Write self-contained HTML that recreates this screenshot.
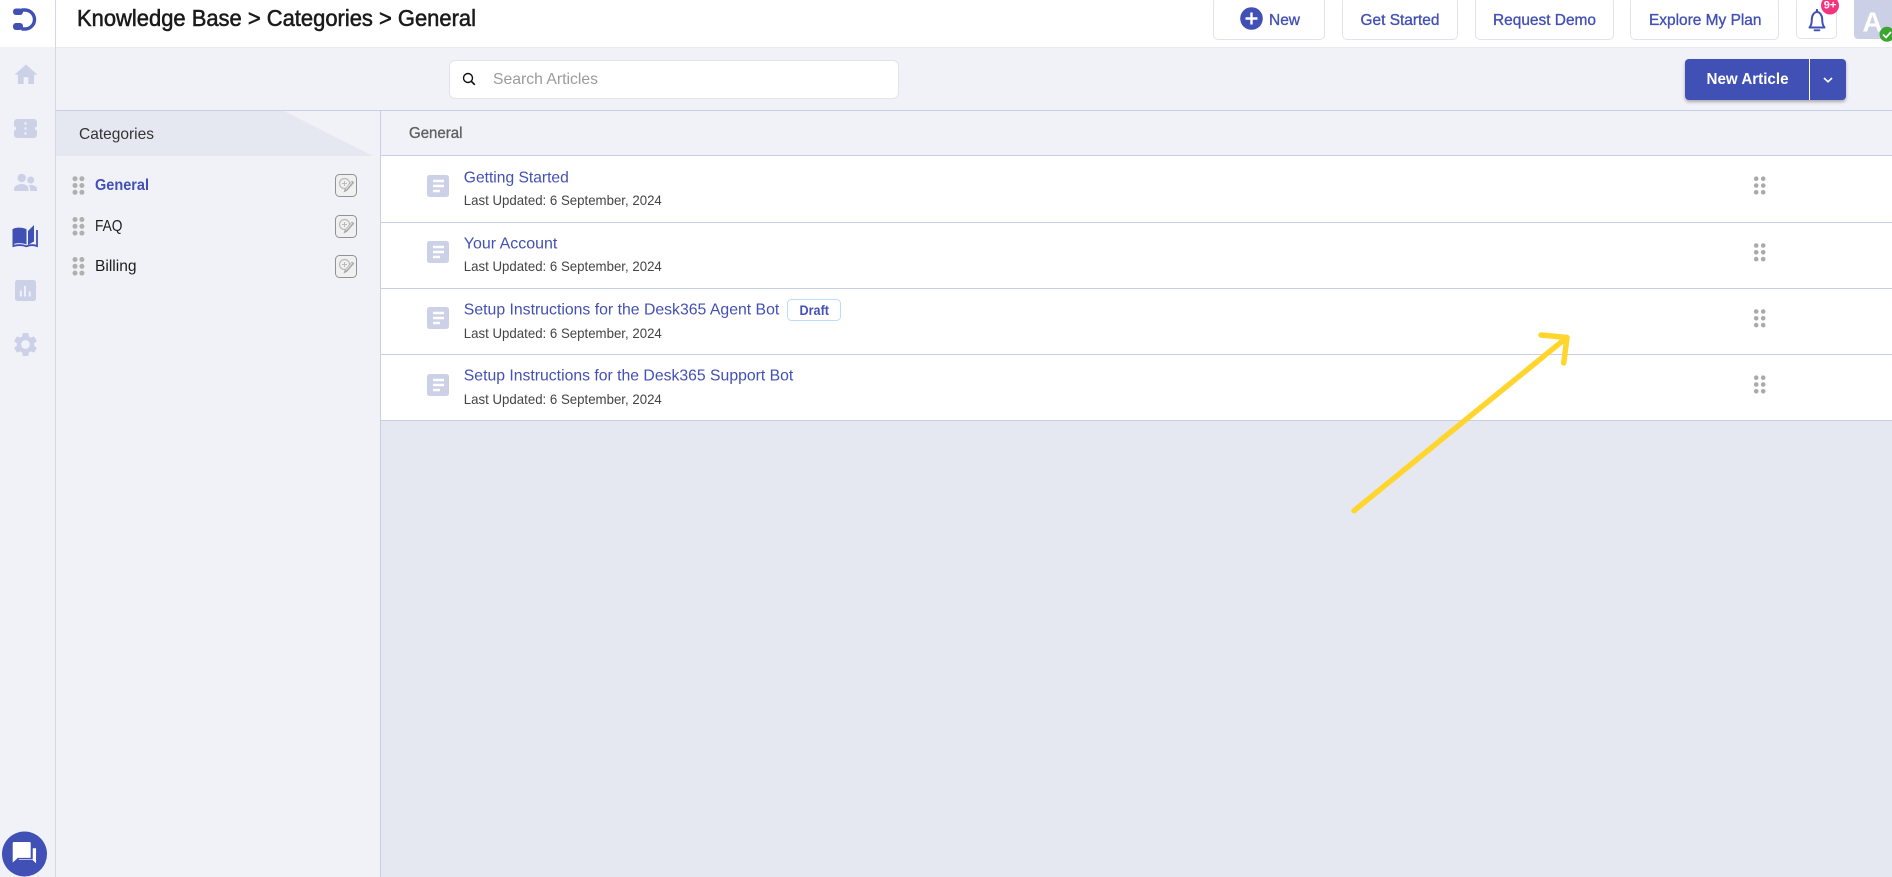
<!DOCTYPE html>
<html lang="en">
<head>
<meta charset="utf-8">
<title>Knowledge Base</title>
<style>
html,body{margin:0;padding:0;width:1892px;height:877px;overflow:hidden;background:#f1f2f8;font-family:"Liberation Sans",sans-serif}
.b{position:absolute;box-sizing:border-box}
.btn{background:#fff;border:1px solid #e2e3e9;border-radius:5px}
svg{position:absolute;left:0;top:0}
text{font-family:"Liberation Sans",sans-serif}
.m{stroke-width:.35px}
.t{stroke-width:.55px}
</style>
</head>
<body>
<div class="b" style="left:0;top:0;width:1892px;height:47px;background:#fff"></div>
<div class="b" style="left:55px;top:47px;width:1837px;height:1px;background:#e9eaf0"></div>
<div class="b" style="left:55px;top:0;width:1px;height:877px;background:#d5d7e2"></div>

<div class="b btn" style="left:1213px;top:-3px;width:112px;height:43px"></div>
<div class="b btn" style="left:1342px;top:-3px;width:116px;height:43px"></div>
<div class="b btn" style="left:1475px;top:-3px;width:139px;height:43px"></div>
<div class="b btn" style="left:1630px;top:-3px;width:149px;height:43px"></div>
<div class="b btn" style="left:1796px;top:-3px;width:41px;height:42px"></div>
<div class="b" style="left:1854px;top:0;width:38px;height:39px;background:#ccd0e6;border-radius:0 0 0 4px"></div>

<div class="b" style="left:449px;top:60px;width:450px;height:39px;background:#fff;border:1px solid #e3e4ea;border-radius:6px"></div>
<div class="b" style="left:1685px;top:59px;width:161px;height:41px;background:#4050b5;border-radius:4px;box-shadow:0 2px 3px rgba(0,0,0,.3)"></div>
<div class="b" style="left:1809px;top:59px;width:1px;height:41px;background:#fff"></div>

<div class="b" style="left:56px;top:110px;width:1836px;height:1px;background:#c9cee6"></div>
<div class="b" style="left:380px;top:110px;width:1px;height:767px;background:#c9cee6"></div>
<div class="b" style="left:381px;top:155px;width:1511px;height:266px;background:#fff"></div>
<div class="b" style="left:381px;top:421px;width:1511px;height:456px;background:#e5e8f1"></div>
<div class="b" style="left:381px;top:155px;width:1511px;height:1px;background:#c9cee6"></div>
<div class="b" style="left:381px;top:222px;width:1511px;height:1px;background:#c9cee6"></div>
<div class="b" style="left:381px;top:288px;width:1511px;height:1px;background:#c9cee6"></div>
<div class="b" style="left:381px;top:354px;width:1511px;height:1px;background:#c9cee6"></div>
<div class="b" style="left:381px;top:420px;width:1511px;height:1px;background:#c9cee6"></div>

<svg width="1892" height="877" viewBox="0 0 1892 877" xmlns="http://www.w3.org/2000/svg">
  <defs>
    <g id="grip" fill="#b0b0b0">
      <circle cx="0" cy="0" r="2.500"/><circle cx="6.900" cy="0" r="2.500"/>
      <circle cx="0" cy="6.800" r="2.500"/><circle cx="6.900" cy="6.800" r="2.500"/>
      <circle cx="0" cy="13.600" r="2.500"/><circle cx="6.900" cy="13.600" r="2.500"/>
    </g>
    <g id="grip2" fill="#aaa">
      <circle cx="0" cy="0" r="2.300"/><circle cx="7" cy="0" r="2.300"/>
      <circle cx="0" cy="6.800" r="2.300"/><circle cx="7" cy="6.800" r="2.300"/>
      <circle cx="0" cy="13.600" r="2.300"/><circle cx="7" cy="13.600" r="2.300"/>
    </g>
    <g id="doc">
      <rect x="0" y="0" width="22" height="22" rx="2.500" fill="#cdd1e8"/>
      <path d="M6 6h11M6 11h11M6 16h7" stroke="#fff" stroke-width="2.500" fill="none"/>
    </g>
    <g id="edit">
      <rect x=".5" y=".5" width="21" height="22" rx="4" fill="#f0f0f1" stroke="#929292"/>
      <circle cx="9.500" cy="9.500" r="5" fill="none" stroke="#bcbcbc" stroke-width="1.200"/>
      <path d="M9.500 7v5M7 9.500h5" stroke="#bcbcbc" stroke-width="1"/>
      <path d="M8.500 18.500l1.300-3.800 7.200-8.200 2.300 2-7.200 8.200z" fill="#a8a8a8"/>
      <path d="M10.800 15.200l6.400-7.300" stroke="#f0f0f1" stroke-width=".8"/>
    </g>
  </defs>

  <!-- sidebar icons -->
  <path d="M21.500 10h3.500a9.500 9.500 0 0 1 0 19h-3.500" fill="none" stroke="#4050b5" stroke-width="3.400"/>
  <rect x="13" y="8.500" width="10" height="6.500" rx="3" fill="#4050b5"/>
  <rect x="13" y="23" width="10" height="7" rx="3" fill="#4050b5"/>

  <path transform="translate(12.200,61) scale(1.150)" fill="#cdd1e8" d="M10 20v-6h4v6h5v-8h3L12 3 2 12h3v8z"/>

  <path fill="#cdd1e8" d="M17 119h17a3 3 0 0 1 3 3v4.500a2 2 0 0 0 0 4V135a3 3 0 0 1-3 3H17a3 3 0 0 1-3-3v-4.500a2 2 0 0 0 0-4V122a3 3 0 0 1 3-3z"/>
  <g fill="#f1f2f8"><circle cx="25.500" cy="123.500" r="1.200"/><circle cx="25.500" cy="128.500" r="1.200"/><circle cx="25.500" cy="133.500" r="1.200"/></g>

  <g fill="#cdd1e8">
    <circle cx="21.700" cy="178" r="4.200"/><circle cx="30.700" cy="180" r="3.500"/>
    <path d="M14 191v-2.200c0-3 4.500-4.800 7.700-4.800s6.800 1.800 6.800 4.800v2.200z"/>
    <path d="M30 191v-2.500c0-1.300-.5-2.400-1.400-3.300.7-.2 1.400-.3 2.100-.3 3 0 6.300 1.500 6.300 4v2.100z"/>
  </g>

  <path fill="#4050b5" d="M13.500 228.500c4-1.300 9-1.300 13 .7v15.300c-3.800-1.700-9-1.700-13-.5z"/>
  <path fill="#4050b5" d="M28 231l6-6v16.500l-6 3.500z"/>
  <path fill="none" stroke="#4050b5" stroke-width="1.800" d="M13.400 229v17c4-1.200 9-1.200 13 .3 3.500-1.500 7.500-1.500 10.600-.3V230"/>

  <rect x="15" y="280" width="21" height="21" rx="2.500" fill="#cdd1e8"/>
  <path d="M20.800 290.500v6M25 286v10.500M29.700 291.500v5" stroke="#f1f2f8" stroke-width="1.900"/>

  <path transform="translate(11.100,330.100) scale(1.200)" fill="#cdd1e8" d="M19.140 12.940c.04-.3.06-.61.06-.94 0-.32-.02-.64-.07-.94l2.030-1.580c.18-.14.23-.41.12-.61l-1.920-3.320c-.12-.22-.37-.29-.59-.22l-2.390.96c-.5-.38-1.030-.7-1.620-.94l-.36-2.540c-.04-.24-.24-.41-.48-.41h-3.840c-.24 0-.43.17-.47.41l-.36 2.540c-.59.24-1.130.57-1.620.94l-2.390-.96c-.22-.08-.47 0-.59.22L2.740 8.870c-.12.21-.08.47.12.61l2.030 1.580c-.05.3-.09.63-.09.94s.02.64.07.94l-2.030 1.580c-.18.14-.23.41-.12.61l1.920 3.320c.12.22.37.29.59.22l2.390-.96c.5.38 1.030.7 1.620.94l.36 2.540c.05.24.24.41.48.41h3.840c.24 0 .44-.17.47-.41l.36-2.540c.59-.24 1.130-.56 1.620-.94l2.390.96c.22.08.47 0 .59-.22l1.920-3.320c.12-.22.07-.47-.12-.61l-2.010-1.580zM12 15.600c-1.980 0-3.600-1.620-3.600-3.600s1.620-3.600 3.600-3.600 3.600 1.620 3.600 3.600-1.620 3.600-3.600 3.600z"/>

  <circle cx="24.500" cy="854" r="22.500" fill="#4050b5"/>
  <path fill="#fff" d="M14 842h15.500a1.200 1.200 0 0 1 1.200 1.200v14.300a1.200 1.200 0 0 1-1.200 1.200H17l-4.300 3.800V843.200A1.200 1.200 0 0 1 14 842z"/>
  <path fill="#fff" stroke="#4050b5" stroke-width="1.500" d="M32 847.500h4.800v17.500l-4.500-4.200H18v-2.200h14z"/>

  <!-- title -->
  <text x="77" y="26" font-size="23" fill="#1a1a1a" stroke="#1a1a1a" class="t" textLength="399" lengthAdjust="spacingAndGlyphs">Knowledge Base &gt; Categories &gt; General</text>

  <!-- header buttons -->
  <circle cx="1251.500" cy="18.500" r="11.300" fill="#4050b5"/>
  <path d="M1245.500 18.500h12M1251.500 12.500v12" stroke="#fff" stroke-width="2.400"/>
  <g font-size="16" fill="#4350b4" stroke="#4350b4" class="m">
    <text x="1269" y="25" textLength="31" lengthAdjust="spacingAndGlyphs">New</text>
    <text x="1360.500" y="25" textLength="79" lengthAdjust="spacingAndGlyphs">Get Started</text>
    <text x="1493" y="25" textLength="103" lengthAdjust="spacingAndGlyphs">Request Demo</text>
    <text x="1649" y="25" textLength="112.500" lengthAdjust="spacingAndGlyphs">Explore My Plan</text>
  </g>

  <!-- bell -->
  <path d="M1809.500 27.500c1.800-2 2.300-4 2.300-8 0-4.300 2.300-7.500 5.200-7.500s5.200 3.200 5.200 7.500c0 4 .5 6 2.300 8z" fill="#fff" stroke="#4050b5" stroke-width="2" stroke-linejoin="round"/>
  <path d="M1817 9v3" stroke="#4050b5" stroke-width="2"/>
  <path d="M1814.500 30.300h5" stroke="#4050b5" stroke-width="1.800" stroke-linecap="round"/>
  <circle cx="1830" cy="5.500" r="9" fill="#f5347f"/>
  <text x="1830" y="8.500" font-size="11" font-weight="bold" fill="#fff" text-anchor="middle">9+</text>

  <!-- avatar -->
  <text x="1872.500" y="31.500" font-size="28" font-weight="bold" fill="#fff" text-anchor="middle">A</text>
  <circle cx="1887" cy="34.300" r="7.500" fill="#3aa52f"/>
  <path d="M1883 34.500l3 3 5-5.500" fill="none" stroke="#fff" stroke-width="1.800"/>

  <!-- search -->
  <circle cx="468" cy="78" r="4.500" fill="none" stroke="#111" stroke-width="1.400"/>
  <path d="M471.200 81.200l3.600 3.600" stroke="#111" stroke-width="1.700"/>
  <text x="493" y="84" font-size="16" fill="#9b9b9b" textLength="105" lengthAdjust="spacingAndGlyphs">Search Articles</text>

  <!-- new article -->
  <text x="1706.500" y="84" font-size="16" font-weight="bold" fill="#fff" textLength="82" lengthAdjust="spacingAndGlyphs">New Article</text>
  <path d="M1824 78l4 3.800 4-3.800" fill="none" stroke="#fff" stroke-width="1.600"/>

  <!-- categories panel -->
  <polygon points="56,111 284,111 373,156 56,156" fill="#e5e8f1"/>
  <text x="79" y="139" font-size="16" fill="#333" textLength="75" lengthAdjust="spacingAndGlyphs">Categories</text>
  <text x="409" y="138" font-size="16" fill="#5f5f5f" stroke="#5f5f5f" class="m" textLength="53.500" lengthAdjust="spacingAndGlyphs">General</text>

  <use href="#grip" x="75" y="178.700"/>
  <use href="#grip" x="75" y="219.500"/>
  <use href="#grip" x="75" y="259.500"/>
  <text x="95" y="190" font-size="16" font-weight="bold" fill="#4350b4" textLength="54" lengthAdjust="spacingAndGlyphs">General</text>
  <text x="95" y="231" font-size="16" fill="#1d1d1d" textLength="27.500" lengthAdjust="spacingAndGlyphs">FAQ</text>
  <text x="95" y="271" font-size="16" fill="#1d1d1d" textLength="41.500" lengthAdjust="spacingAndGlyphs">Billing</text>
  <use href="#edit" x="335" y="174"/>
  <use href="#edit" x="335" y="215"/>
  <use href="#edit" x="335" y="255"/>

  <!-- rows -->
  <use href="#doc" x="427" y="175"/>
  <use href="#doc" x="427" y="241"/>
  <use href="#doc" x="427" y="307"/>
  <use href="#doc" x="427" y="374"/>
  <g font-size="16" fill="#4350b4">
    <text x="463.800" y="182.500" textLength="105" lengthAdjust="spacingAndGlyphs">Getting Started</text>
    <text x="463.800" y="248.500" textLength="93.500" lengthAdjust="spacingAndGlyphs">Your Account</text>
    <text x="463.800" y="314.500" textLength="315.500" lengthAdjust="spacingAndGlyphs">Setup Instructions for the Desk365 Agent Bot</text>
    <text x="463.800" y="380.500" textLength="329.500" lengthAdjust="spacingAndGlyphs">Setup Instructions for the Desk365 Support Bot</text>
  </g>
  <g font-size="14" fill="#444">
    <text x="463.800" y="205" textLength="198" lengthAdjust="spacingAndGlyphs">Last Updated: 6 September, 2024</text>
    <text x="463.800" y="271" textLength="198" lengthAdjust="spacingAndGlyphs">Last Updated: 6 September, 2024</text>
    <text x="463.800" y="338" textLength="198" lengthAdjust="spacingAndGlyphs">Last Updated: 6 September, 2024</text>
    <text x="463.800" y="404" textLength="198" lengthAdjust="spacingAndGlyphs">Last Updated: 6 September, 2024</text>
  </g>
  <rect x="787.500" y="299.500" width="53" height="21" rx="4" fill="#fff" stroke="#bcdcfc"/>
  <text x="799.500" y="315" font-size="14" font-weight="bold" fill="#4350b4" textLength="29.500" lengthAdjust="spacingAndGlyphs">Draft</text>

  <use href="#grip2" x="1756.200" y="178.700"/>
  <use href="#grip2" x="1756.200" y="245.500"/>
  <use href="#grip2" x="1756.200" y="311.500"/>
  <use href="#grip2" x="1756.200" y="377.700"/>

  <!-- arrow -->
  <path d="M1354 510.700L1566.500 337.700M1541 335l26 2.500-3.300 25.500" fill="none" stroke="#ffd52e" stroke-width="5.500" stroke-linecap="round" stroke-linejoin="round"/>
</svg>
</body>
</html>
